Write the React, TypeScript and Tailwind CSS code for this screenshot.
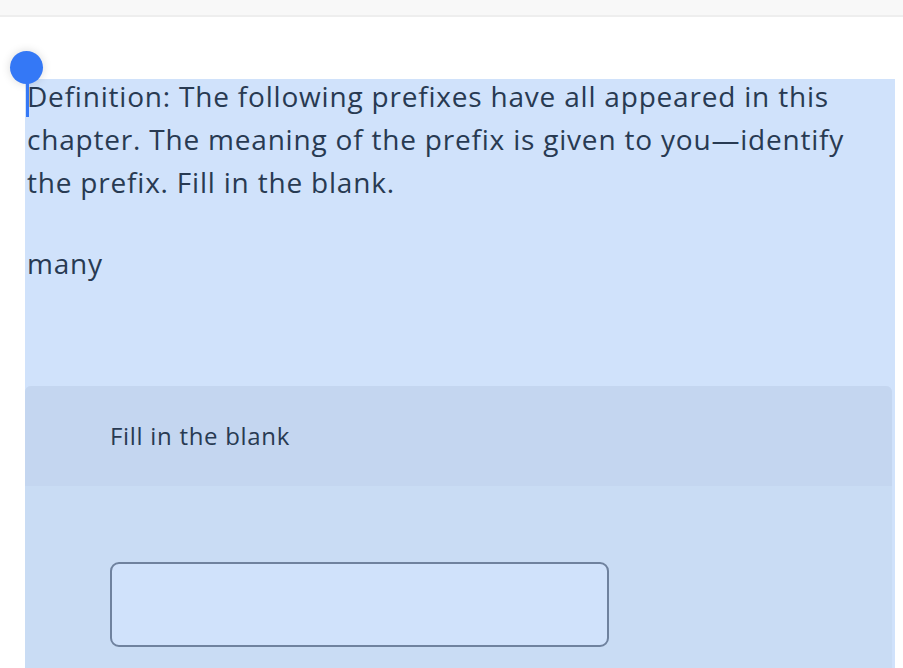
import React from 'react';

const App: React.FC = () => {
  return (
    <div className="relative h-[668px] w-[903px] overflow-hidden bg-white">
      {/* top strip */}
      <div className="h-[17px] border-b-2 border-[#eeeeee] bg-[#f8f8f8]" />

      <div className="pl-[25px] pr-[8px] pt-[62px]">
        {/* selected question block */}
        <div className="relative flow-root bg-[#d0e2fb]">
          {/* selection handle */}
          <div className="absolute -left-[15px] -top-[28px] h-[33px] w-[33px] rounded-full bg-[#3478f6] shadow-[0_0_10px_rgba(0,0,0,0.15)]" />
          <div className="absolute left-[1px] top-[4px] h-[34px] w-[3px] bg-[#3478f6]" />

          <div
            className="-mt-[4px] pl-[2px] text-[28px] leading-[43px] tracking-[0.8px] text-[#283a52]"
            style={{ fontFamily: '"Open Sans", Lato, sans-serif' }}
          >
            <p>
              Definition: The following prefixes have all appeared in this
              <br />
              chapter. The meaning of the prefix is given to you—identify
              <br />
              the prefix. Fill in the blank.
            </p>
            <p className="mt-[38px]">many</p>
          </div>

          <div className="mt-[101px] mr-[3px] rounded-t-[6px] bg-[#c9dcf4]">
            <div
              className="flex h-[100px] items-center rounded-t-[6px] bg-[#c4d6f0] pl-[85px] text-[24px] tracking-[0.7px] text-[#283a52]"
              style={{ fontFamily: '"Open Sans", Lato, sans-serif' }}
            >
              Fill in the blank
            </div>
            <div className="pl-[85px] pt-[76px] pb-[40px]">
              <div className="h-[85px] w-[499px] rounded-[9px] border-2 border-[#6f829e] bg-[#d0e2fb]" />
            </div>
          </div>
        </div>
      </div>
    </div>
  );
};

export default App;
